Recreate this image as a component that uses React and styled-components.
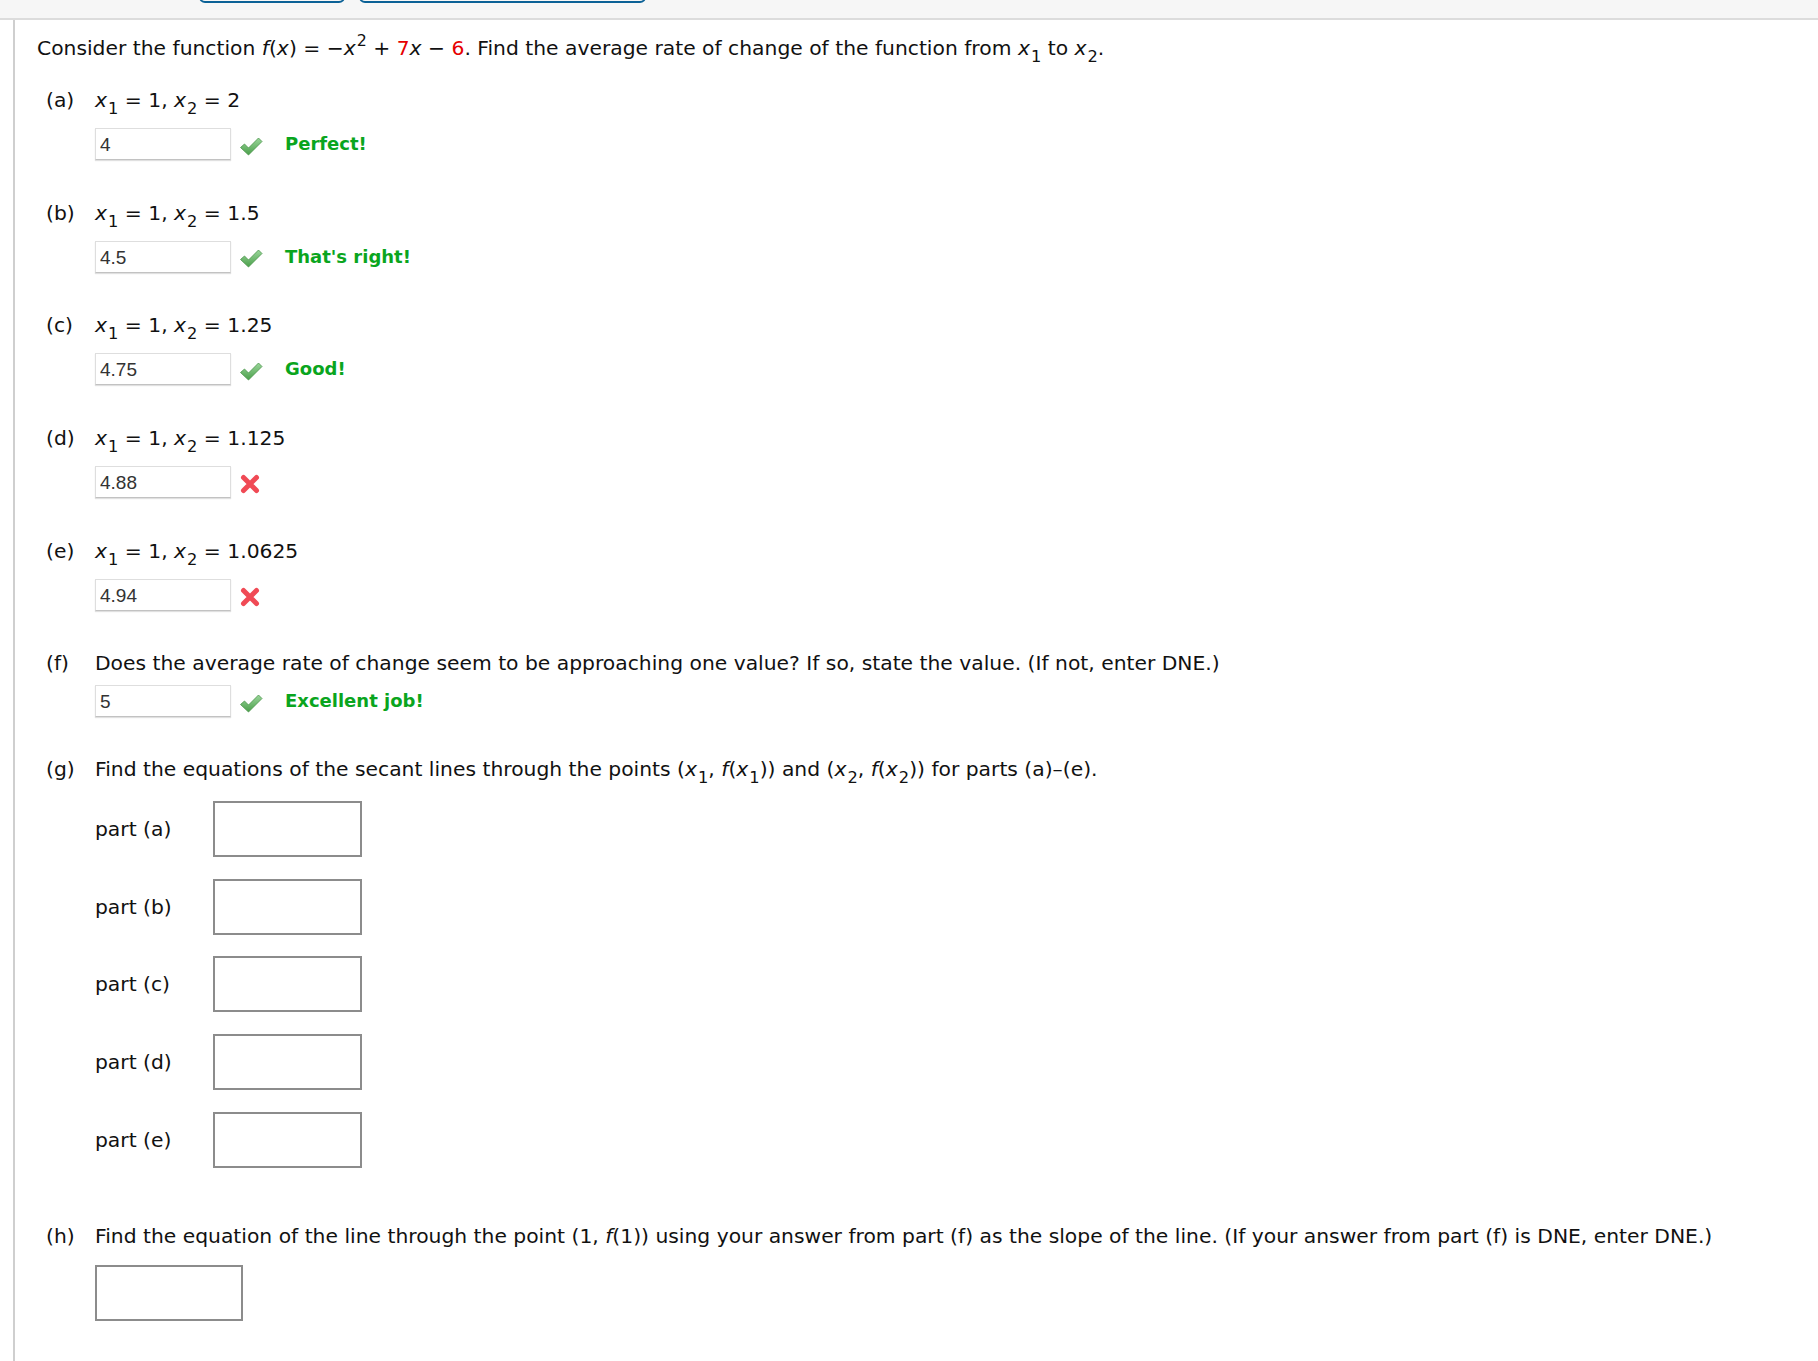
import React from "react"
import styled, { createGlobalStyle } from "styled-components"

const GlobalStyle = createGlobalStyle`
  html, body {
    margin: 0;
    padding: 0;
    background: #fff;
  }
  body {
    font-family: "DejaVu Sans", Verdana, sans-serif;
    color: #111;
  }
`

const TopBar = styled.div`
  height: 18px;
  background: #f6f6f6;
  border-bottom: 2px solid #dcdcdc;
  display: flex;
  align-items: flex-start;
  gap: 14px;
  padding-left: 199px;
  overflow: hidden;
`

const BarButton = styled.div`
  width: ${(p) => p.$w}px;
  height: 30px;
  margin-top: -27px;
  box-sizing: border-box;
  border: 2px solid #0b6196;
  border-radius: 6px;
  background: #f6f6f6;
`

const Main = styled.main`
  margin-left: 13px;
  border-left: 2px solid #cfcfcf;
  padding: 14px 0 0 22px;
  min-height: calc(100vh - 20px);
  box-sizing: border-box;
  font-size: 20.3px;
  line-height: 28px;
`

const Intro = styled.p`
  margin: 0 0 24px;
  white-space: nowrap;
`

const Red = styled.span`
  color: #e60000;
`

const Var = styled.i`
  font-style: italic;
`

const Sub = styled.sub`
  font-size: 0.8em;
  line-height: 0;
  vertical-align: -0.42em;
  margin-left: 1px;
`

const Sup = styled.sup`
  font-size: 0.78em;
  line-height: 0;
  vertical-align: 0.6em;
  margin-left: 1px;
`

const Part = styled.section`
  display: grid;
  grid-template-columns: 49px 1fr;
  padding-left: 9px;
  margin-bottom: ${(p) => p.$after ?? 38.7}px;
`

const Letter = styled.span``

const Body = styled.div``

const Prompt = styled.div`
  white-space: nowrap;
  height: 28px;
`

const AnswerRow = styled.div`
  display: flex;
  align-items: center;
  height: 32px;
  margin-top: ${(p) => p.$gap}px;
`

const Field = styled.input`
  width: 136px;
  height: 32px;
  box-sizing: border-box;
  margin: 0;
  padding: 2px 4px 0;
  border: 1px solid #dedede;
  border-bottom-color: #c2c2c2;
  box-shadow: 0 1px 1px rgba(0, 0, 0, 0.12);
  font-family: "Liberation Sans", Arial, sans-serif;
  font-size: 19px;
  color: #333;
  background: #fff;
  outline: none;
`

const Mark = styled.span`
  display: inline-flex;
  width: 24px;
  margin-left: 8px;
  margin-top: 4px;
`

const Feedback = styled.span`
  margin-left: 22px;
  font-weight: bold;
  font-size: 18px;
  color: #0aa51e;
`

const SecantGrid = styled.div`
  display: grid;
  grid-template-columns: 118px 149px;
  row-gap: 21.7px;
  align-items: center;
  margin-top: 18px;
`

const EmptyBox = styled.div`
  width: ${(p) => p.$w ?? 149}px;
  height: 56px;
  box-sizing: border-box;
  border: 2px solid #8c8c8c;
  background: #fff;
`

const HBox = styled.div`
  margin-top: 15px;
`

const Check = () => (
  <svg width="25" height="21" viewBox="0 0 24 20">
    <defs>
      <linearGradient id="ck" x1="0" y1="0" x2="0" y2="1">
        <stop offset="0" stopColor="#9ad69a" />
        <stop offset="1" stopColor="#4b9f4b" />
      </linearGradient>
    </defs>
    <path
      d="M1.5 11 L5.5 7.5 L9.5 11.5 L19.5 1.5 L23 5 L9.5 18.5 Z"
      fill="url(#ck)"
      stroke="#4a944a"
      strokeWidth="0.8"
      strokeLinejoin="round"
    />
  </svg>
)

const Cross = () => (
  <svg width="22" height="22" viewBox="0 0 22 22">
    <path
      d="M4.5 4.5 L17.5 17.5 M17.5 4.5 L4.5 17.5"
      stroke="#f04a55"
      strokeWidth="5"
      strokeLinecap="round"
    />
  </svg>
)

const Xsub = ({ n }) => (
  <>
    <Var>x</Var>
    <Sub>{n}</Sub>
  </>
)

const rows = [
  { key: "a", x2: "2", value: "4", ok: true, msg: "Perfect!" },
  { key: "b", x2: "1.5", value: "4.5", ok: true, msg: "That's right!" },
  { key: "c", x2: "1.25", value: "4.75", ok: true, msg: "Good!" },
  { key: "d", x2: "1.125", value: "4.88", ok: false },
  { key: "e", x2: "1.0625", value: "4.94", ok: false },
]

const Answer = ({ value, ok, msg, gap }) => (
  <AnswerRow $gap={gap}>
    <Field readOnly value={value} />
    <Mark>{ok ? <Check /> : <Cross />}</Mark>
    {msg && <Feedback>{msg}</Feedback>}
  </AnswerRow>
)

export default function App() {
  return (
    <>
      <GlobalStyle />
      <TopBar>
        <BarButton $w={146} />
        <BarButton $w={287} />
      </TopBar>
      <Main>
        <Intro>
          Consider the function <Var>f</Var>(<Var>x</Var>) = −<Var>x</Var>
          <Sup>2</Sup> + <Red>7</Red>
          <Var>x</Var> − <Red>6</Red>. Find the average rate of change of the
          function from <Xsub n="1" /> to <Xsub n="2" />.
        </Intro>

        {rows.map((r) => (
          <Part key={r.key}>
            <Letter>({r.key})</Letter>
            <Body>
              <Prompt>
                <Xsub n="1" /> = 1, <Xsub n="2" /> = {r.x2}
              </Prompt>
              <Answer value={r.value} ok={r.ok} msg={r.msg} gap={14} />
            </Body>
          </Part>
        ))}

        <Part $after={37.5}>
          <Letter>(f)</Letter>
          <Body>
            <Prompt>
              Does the average rate of change seem to be approaching one value?
              If so, state the value. (If not, enter DNE.)
            </Prompt>
            <Answer value="5" ok msg="Excellent job!" gap={8} />
          </Body>
        </Part>

        <Part $after={54}>
          <Letter>(g)</Letter>
          <Body>
            <Prompt>
              Find the equations of the secant lines through the points (
              <Xsub n="1" />, <Var>f</Var>(<Xsub n="1" />)) and (
              <Xsub n="2" />, <Var>f</Var>(<Xsub n="2" />)) for parts (a)–(e).
            </Prompt>
            <SecantGrid>
              {["a", "b", "c", "d", "e"].map((k) => (
                <React.Fragment key={k}>
                  <span>part ({k})</span>
                  <EmptyBox />
                </React.Fragment>
              ))}
            </SecantGrid>
          </Body>
        </Part>

        <Part>
          <Letter>(h)</Letter>
          <Body>
            <Prompt>
              Find the equation of the line through the point (1,{" "}
              <Var>f</Var>(1)) using your answer from part (f) as the slope of
              the line. (If your answer from part (f) is DNE, enter DNE.)
            </Prompt>
            <HBox>
              <EmptyBox $w={148} />
            </HBox>
          </Body>
        </Part>
      </Main>
    </>
  )
}
